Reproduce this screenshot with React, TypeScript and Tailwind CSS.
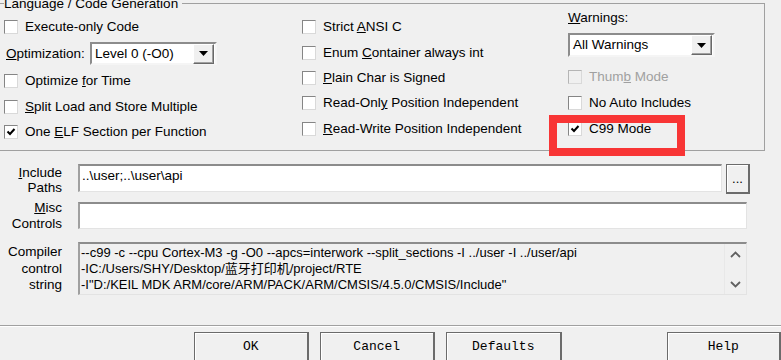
import type { ReactNode } from "react";

const CheckMark = () => (
  <svg className="w-[10px] h-[10px]" viewBox="0 0 10 10">
    <path d="M1.5 4.5 L4 7 L8.5 2" fill="none" stroke="#000" strokeWidth="2" />
  </svg>
);

const Check = ({
  label,
  checked = false,
  disabled = false,
  className = "",
}: {
  label: ReactNode;
  checked?: boolean;
  disabled?: boolean;
  className?: string;
}) => (
  <div className={`flex items-center gap-[7px] ${className}`}>
    <div
      className={`w-[14px] h-[14px] flex items-center justify-center border border-t-[#858585] border-l-[#858585] border-r-[#d9d9d9] border-b-[#d9d9d9] ${
        disabled ? "bg-[#f0f0f0] border-t-[#b5b5b5] border-l-[#b5b5b5]" : "bg-white"
      }`}
    >
      {checked && <CheckMark />}
    </div>
    <span className={`whitespace-nowrap ${disabled ? "text-[#a0a0a0]" : "text-black"}`}>{label}</span>
  </div>
);

const Arrow = () => (
  <div className="w-[21px] h-[20px] flex items-center justify-center bg-[#f0f0f0] border border-t-white border-l-white border-r-[#696969] border-b-[#696969] shadow-[inset_-1px_-1px_0_#a0a0a0]">
    <svg className="w-[9px] h-[5px]" viewBox="0 0 9 5">
      <path d="M0 0 H9 L4.5 5 Z" fill="#000" />
    </svg>
  </div>
);

const Combo = ({ value, className = "" }: { value: string; className?: string }) => (
  <div
    className={`flex items-center bg-white border-2 border-t-[#8c8c8c] border-l-[#8c8c8c] border-r-[#f5f5f5] border-b-[#f5f5f5] pl-[3px] pr-[1px] ${className}`}
  >
    <span className="flex-1 whitespace-nowrap">{value}</span>
    <Arrow />
  </div>
);

const sunken =
  "border-t-2 border-l-2 border-r border-b border-t-[#8c8c8c] border-l-[#a0a0a0] border-r-[#e3e3e3] border-b-[#e3e3e3]";

const Button = ({ children, className = "" }: { children: ReactNode; className?: string }) => (
  <div
    className={`h-[30px] flex items-center justify-center bg-[#f0f0f0] border border-[#6b6b6b] border-r-2 border-b-2 shadow-[inset_1px_1px_0_#fff] font-['Liberation_Mono',monospace] text-[13px] text-black ${className}`}
  >
    {children}
  </div>
);

const Chevron = ({ up }: { up?: boolean }) => (
  <svg className="w-[11px] h-[7px]" viewBox="0 0 11 7">
    <path d={up ? "M1 6 L5.5 1.5 L10 6" : "M1 1 L5.5 5.5 L10 1"} fill="none" stroke="#606060" strokeWidth="1.8" />
  </svg>
);

export default function App() {
  return (
    <div className="relative w-[781px] h-[360px] overflow-hidden bg-[#f0f0f0] font-['Liberation_Sans','Noto_Sans_CJK_SC',sans-serif] text-[13.5px] leading-[16px] text-black">
      {/* Language / Code Generation group */}
      <div className="relative mt-[3px] ml-[-3px] w-[768px] h-[148px] border border-[#a0a0a0] flex">
        <span className="absolute top-[-8px] left-[6px] pr-[4px] bg-[#f0f0f0] leading-[15px] whitespace-nowrap">
          Language / Code Generation
        </span>

        {/* left column */}
        <div className="w-[304px] pl-[6px] pt-[10px] flex flex-col">
          <Check className="h-[26px]" label="Execute-only Code" />
          <div className="h-[27px] flex items-center">
            <span className="ml-[2px] w-[84px]">
              <u>O</u>ptimization:
            </span>
            <Combo value="Level 0 (-O0)" className="w-[127px] h-[23px]" />
          </div>
          <Check
            className="h-[27px]"
            label={
              <>
                Optimize <u>f</u>or Time
              </>
            }
          />
          <Check
            className="h-[25px]"
            label={
              <>
                <u>S</u>plit Load and Store Multiple
              </>
            }
          />
          <Check
            className="h-[26px]"
            checked
            label={
              <>
                One <u>E</u>LF Section per Function
              </>
            }
          />
        </div>

        {/* middle column */}
        <div className="w-[266px] pt-[10px] flex flex-col">
          <Check
            className="h-[26px]"
            label={
              <>
                Strict <u>A</u>NSI C
              </>
            }
          />
          <Check
            className="h-[25px]"
            label={
              <>
                Enum <u>C</u>ontainer always int
              </>
            }
          />
          <Check
            className="h-[25px]"
            label={
              <>
                <u>P</u>lain Char is Signed
              </>
            }
          />
          <Check
            className="h-[26px]"
            label={
              <>
                Read-Onl<u>y</u> Position Independent
              </>
            }
          />
          <Check
            className="h-[26px]"
            label={
              <>
                <u>R</u>ead-Write Position Independent
              </>
            }
          />
        </div>

        {/* right column */}
        <div className="flex-1 pt-[6px] flex flex-col">
          <div className="h-[16px] flex items-center">
            <span>
              <u>W</u>arnings:
            </span>
          </div>
          <Combo value="All Warnings" className="mt-[7px] w-[147px] h-[24px]" />
          <Check
            className="mt-[7px] h-[26px]"
            disabled
            label={
              <>
                Thum<u>b</u> Mode
              </>
            }
          />
          <Check className="h-[26px]" label="No Auto Includes" />
          <Check className="h-[26px]" checked label="C99 Mode" />
        </div>
      </div>

      {/* Include Paths */}
      <div className="mt-[13px] h-[28px] flex items-start">
        <div className="w-[62px] mt-[1px] text-right leading-[15px]">
          <u>I</u>nclude
          <br />
          Paths
        </div>
        <div className={`ml-[16px] w-[644px] h-[28px] bg-white ${sunken} pl-[2px] pt-[2px] whitespace-nowrap`}>
          ..\user;..\user\api
        </div>
        <Button className="ml-[4px] w-[24px] h-[28px] font-['Liberation_Sans',sans-serif] text-[#1a1a60]">
          ...
        </Button>
      </div>

      {/* Misc Controls */}
      <div className="mt-[10px] h-[27px] flex items-start">
        <div className="w-[62px] mt-[-2px] text-right leading-[16px]">
          <u>M</u>isc
          <br />
          Controls
        </div>
        <div className={`ml-[16px] w-[669px] h-[27px] bg-white ${sunken}`} />
      </div>

      {/* Compiler control string */}
      <div className="mt-[13px] h-[53px] flex items-start">
        <div className="w-[62px] mt-[2px] text-right leading-[16.5px]">
          Compiler
          <br />
          control
          <br />
          string
        </div>
        <div className={`ml-[16px] w-[669px] h-[53px] flex bg-[#f0f0f0] ${sunken}`}>
          <div className="flex-1 pl-[1px] pt-[1px] text-[13px] leading-[16px] whitespace-pre overflow-hidden">
            <div>--c99 -c --cpu Cortex-M3 -g -O0 --apcs=interwork --split_sections -I ../user -I ../user/api</div>
            <div>-IC:/Users/SHY/Desktop/蓝牙打印机/project/RTE</div>
            <div>-I"D:/KEIL MDK ARM/core/ARM/PACK/ARM/CMSIS/4.5.0/CMSIS/Include"</div>
          </div>
          <div className="w-[22px] border-l border-l-[#e8e8e8] flex flex-col items-center justify-between pt-[7px] pb-[6px]">
            <Chevron up />
            <Chevron />
          </div>
        </div>
      </div>

      {/* separator */}
      <div className="mt-[30px] h-[2px] border-t border-t-[#a0a0a0] border-b border-b-white" />

      {/* buttons */}
      <div className="mt-[5px] flex pl-[194px] gap-[11px]">
        <Button className="w-[115px]">OK</Button>
        <Button className="w-[116px]">Cancel</Button>
        <Button className="w-[116px]">Defaults</Button>
        <Button className="ml-[94px] w-[115px]">Help</Button>
      </div>

      {/* highlight box */}
      <div className="absolute left-[549px] top-[115px] w-[136px] h-[41px] border-[8px] border-[#f83535] pointer-events-none" />
    </div>
  );
}
